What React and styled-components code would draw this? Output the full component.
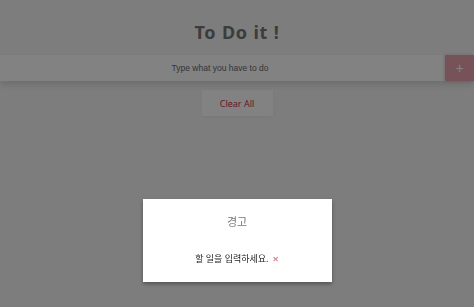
import React from "react";
import styled, { createGlobalStyle } from "styled-components";

const GlobalStyle = createGlobalStyle`
  html, body {
    margin: 0;
    padding: 0;
    background: #f6f6f6;
    font-family: "Noto Sans", "Noto Sans CJK KR", sans-serif;
  }
`;

const Page = styled.div`
  width: 474px;
  height: 307px;
  display: flex;
  flex-direction: column;
  align-items: center;
  padding-top: 18px;
  box-sizing: border-box;
`;

const Title = styled.h1`
  margin: 0;
  font-size: 18px;
  font-weight: 700;
  color: #777;
  letter-spacing: 0.8px;
  line-height: 28px;
`;

const InputRow = styled.div`
  margin-top: 9px;
  width: 100%;
  display: flex;
  height: 26px;
  box-shadow: 0 4px 6px rgba(0, 0, 0, 0.12);
`;

const Input = styled.input`
  flex: 1;
  border: none;
  outline: none;
  background: #fff;
  text-align: center;
  font-family: "Liberation Sans", Arial, sans-serif;
  font-size: 8.5px;
  color: #555;
  padding: 0 5px 0 0;
  &::placeholder {
    color: #6a6a6a;
  }
`;

const AddButton = styled.button`
  width: 29px;
  border: none;
  background: #e9a2ac;
  color: #fff;
  font-size: 14px;
  padding: 0;
  display: flex;
  align-items: center;
  justify-content: center;
  box-shadow: -1px 0 3px rgba(0, 0, 0, 0.15);
`;

const ClearButton = styled.button`
  margin-top: 9px;
  width: 71px;
  height: 26px;
  border: none;
  background: #fff;
  color: #c8324a;
  font-family: "Noto Sans", sans-serif;
  font-size: 9px;
  box-shadow: 0 1px 3px rgba(0, 0, 0, 0.05);
`;

const Overlay = styled.div`
  position: fixed;
  inset: 0;
  background: rgba(0, 0, 0, 0.49);
  display: flex;
  align-items: flex-start;
  justify-content: center;
  padding-top: 199px;
`;

const Modal = styled.div`
  width: 189px;
  height: 83px;
  background: #fff;
  box-shadow: 0 2px 4px rgba(0, 0, 0, 0.35);
  display: flex;
  flex-direction: column;
  align-items: center;
  box-sizing: border-box;
  padding-top: 15px;
`;

const ModalTitle = styled.div`
  font-size: 11px;
  color: #777;
  line-height: 16px;
`;

const ModalBody = styled.div`
  margin-top: 23px;
  font-size: 9px;
  color: #222;
  display: flex;
  align-items: center;
  gap: 4px;
  line-height: 12px;
`;

const Close = styled.span`
  color: #d98a96;
  font-size: 11px;
  font-weight: 700;
`;

export default function App() {
  return (
    <>
      <GlobalStyle />
      <Page>
        <Title>To Do it !</Title>
        <InputRow>
          <Input placeholder="Type what you have to do" />
          <AddButton>+</AddButton>
        </InputRow>
        <ClearButton>Clear All</ClearButton>
      </Page>
      <Overlay>
        <Modal>
          <ModalTitle>경고</ModalTitle>
          <ModalBody>
            할 일을 입력하세요.
            <Close>×</Close>
          </ModalBody>
        </Modal>
      </Overlay>
    </>
  );
}
